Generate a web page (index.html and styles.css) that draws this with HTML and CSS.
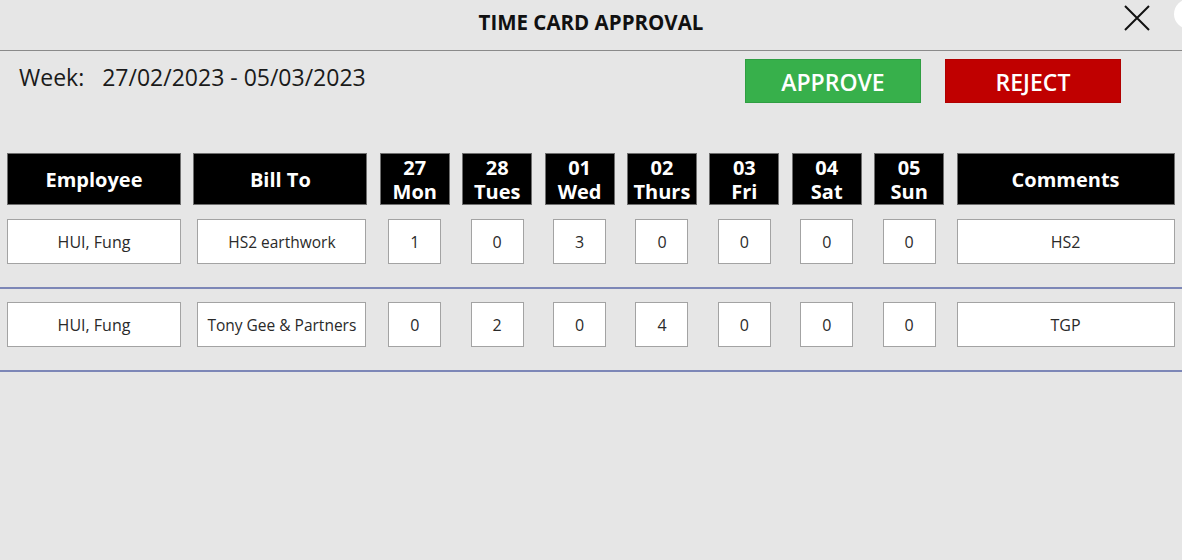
FILE: index.html
```html
<!DOCTYPE html>
<html>
<head>
<meta charset="utf-8">
<link rel="stylesheet" href="styles.css">
</head>
<body>
<div class="app">
  <header class="topbar">
    <div></div>
    <h1 class="title">TIME CARD APPROVAL</h1>
    <div class="top-actions">
      <svg class="close" width="26" height="26" viewBox="0 0 26 26"><path d="M1 1 L25 25 M25 1 L1 25" stroke="#111" stroke-width="2" fill="none"/></svg>
      <span class="dot"></span>
    </div>
  </header>

  <div class="toolbar">
    <div class="week"><span class="week-label">Week:</span><span>27/02/2023 - 05/03/2023</span></div>
    <div class="buttons">
      <button class="btn approve">APPROVE</button>
      <button class="btn reject">REJECT</button>
    </div>
  </div>

  <div class="grid head">
    <div class="hcell">Employee</div>
    <div class="hcell">Bill To</div>
    <div class="hcell day"><span>27</span><span>Mon</span></div>
    <div class="hcell day"><span>28</span><span>Tues</span></div>
    <div class="hcell day"><span>01</span><span>Wed</span></div>
    <div class="hcell day"><span>02</span><span>Thurs</span></div>
    <div class="hcell day"><span>03</span><span>Fri</span></div>
    <div class="hcell day"><span>04</span><span>Sat</span></div>
    <div class="hcell day"><span>05</span><span>Sun</span></div>
    <div class="hcell">Comments</div>
  </div>

  <div class="grid row">
    <div class="cell">HUI, Fung</div>
    <div class="cell bill">HS2 earthwork</div>
    <div class="cell num">1</div>
    <div class="cell num">0</div>
    <div class="cell num">3</div>
    <div class="cell num">0</div>
    <div class="cell num">0</div>
    <div class="cell num">0</div>
    <div class="cell num">0</div>
    <div class="cell">HS2</div>
  </div>

  <div class="grid row">
    <div class="cell">HUI, Fung</div>
    <div class="cell bill">Tony Gee &amp; Partners</div>
    <div class="cell num">0</div>
    <div class="cell num">2</div>
    <div class="cell num">0</div>
    <div class="cell num">4</div>
    <div class="cell num">0</div>
    <div class="cell num">0</div>
    <div class="cell num">0</div>
    <div class="cell">TGP</div>
  </div>
</div>
</body>
</html>
```

FILE: styles.css
```css
* { box-sizing: border-box; }
html, body {
  margin: 0;
  padding: 0;
  background: #e6e6e6;
  font-family: "Open Sans", "Noto Sans", sans-serif;
  color: #222;
}
.app {
  width: 1182px;
  height: 560px;
  overflow: hidden;
}
.topbar {
  height: 51px;
  border-bottom: 1px solid #8a8a8a;
  display: grid;
  grid-template-columns: 1fr auto 1fr;
  align-items: start;
}
.title {
  margin: 0;
  padding-top: 8px;
  font-size: 20.5px;
  font-weight: 700;
  color: #111;
}
.top-actions {
  display: flex;
  justify-content: flex-end;
  align-items: flex-start;
}
.close {
  margin-top: 5px;
  display: block;
}
.dot {
  width: 30px;
  height: 30px;
  border-radius: 50%;
  background: #fff;
  margin-left: 24px;
  margin-right: -22px;
  margin-top: -1px;
  flex: none;
}
.toolbar {
  display: flex;
  align-items: flex-start;
  padding: 8px 61px 0 19px;
  height: 102px;
}
.week {
  font-size: 23px;
  color: #1a1a1a;
  margin-top: 2px;
}
.week-label {
  margin-right: 18px;
}
.buttons {
  margin-left: auto;
  display: flex;
  gap: 24px;
}
.btn {
  width: 176px;
  height: 44px;
  border: 1px solid;
  font-family: "Open Sans", "Noto Sans", sans-serif;
  font-size: 23px;
  font-weight: 600;
  color: #fff;
  padding: 1px 0 0 0;
}
.approve { background: #37b04b; border-color: #2f9e42; }
.reject { background: #c00000; border-color: #b00000; }

.grid {
  display: grid;
  grid-template-columns: 174px 174px repeat(7, 70px) 218px;
  column-gap: 12.4px;
  padding-left: 7px;
}
.head {
  height: 52px;
}
.hcell {
  background: #000;
  border: 1px solid #6f6f6f;
  color: #fff;
  font-weight: 700;
  font-size: 20px;
  display: flex;
  flex-direction: column;
  align-items: center;
  justify-content: center;
  text-align: center;
  line-height: 24px;
  padding-top: 2px;
}
.hcell.day {
  padding-top: 0;
  line-height: 23px;
  gap: 1px;
}
.row {
  padding-top: 14px;
  padding-bottom: 23px;
  border-bottom: 2px solid #7d87b7;
  height: 84px;
  align-items: start;
}
.row + .row {
  height: 83px;
  padding-top: 13px;
}
.cell {
  height: 45px;
  background: #fff;
  border: 1px solid #a3a3a3;
  font-size: 16px;
  color: #2a2a2a;
  display: flex;
  align-items: center;
  justify-content: center;
  white-space: nowrap;
  overflow: hidden;
}
.cell.bill {
  width: 169px;
  justify-self: end;
  margin-right: 1px;
  font-size: 15.5px;
}
.cell.num {
  width: 53px;
  justify-self: center;
}
```
